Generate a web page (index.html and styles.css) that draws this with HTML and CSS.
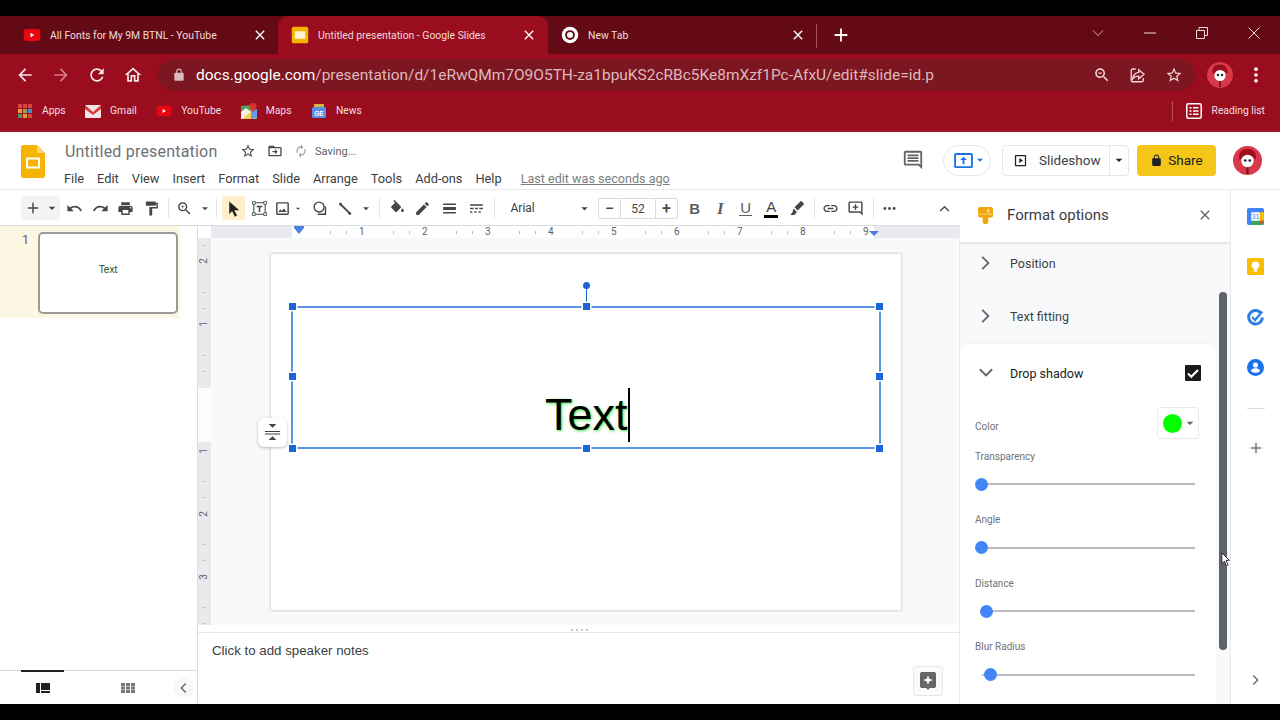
FILE: index.html
```html
<!DOCTYPE html>
<html lang="en">
<head>
    <meta charset="UTF-8">
    <title>Untitled presentation - Google Slides</title>
    <link rel="stylesheet" href="styles.css">
</head>
<body>
    <svg class="sprite" xmlns="http://www.w3.org/2000/svg">
        <symbol id="i-add" viewBox="0 0 24 24"><path d="M19 13h-6v6h-2v-6H5v-2h6V5h2v6h6v2z"/></symbol>
        <symbol id="i-close" viewBox="0 0 24 24"><path d="M19 6.41L17.59 5 12 10.59 6.41 5 5 6.41 10.59 12 5 17.59 6.41 19 12 13.41 17.59 19 19 17.59 13.41 12z"/></symbol>
        <symbol id="i-caret" viewBox="0 0 24 24"><path d="M7 10l5 5 5-5z"/></symbol>
        <symbol id="i-right" viewBox="0 0 24 24"><path d="M8.6 4.6L7.2 6l6 6-6 6 1.4 1.4 7.4-7.4z"/></symbol>
        <symbol id="i-undo" viewBox="0 0 24 24"><path d="M12.5 8c-2.65 0-5.05.99-6.9 2.6L2 7v9h9l-3.62-3.62c1.39-1.16 3.16-1.88 5.12-1.88 3.54 0 6.55 2.31 7.6 5.5l2.37-.78C21.08 11.03 17.15 8 12.5 8z"/></symbol>
        <symbol id="i-redo" viewBox="0 0 24 24"><path d="M18.4 10.6C16.55 8.99 14.15 8 11.5 8c-4.65 0-8.58 3.03-9.96 7.22L3.9 16c1.05-3.19 4.05-5.5 7.6-5.5 1.95 0 3.73.72 5.12 1.88L13 16h9V7l-3.6 3.6z"/></symbol>
        <symbol id="i-print" viewBox="0 0 24 24"><path d="M19 8H5c-1.66 0-3 1.34-3 3v6h4v4h12v-4h4v-6c0-1.66-1.34-3-3-3zm-3 11H8v-5h8v5zm3-7c-.55 0-1-.45-1-1s.45-1 1-1 1 .45 1 1-.45 1-1 1zm-1-9H6v4h12V3z"/></symbol>
        <symbol id="i-paint" viewBox="0 0 24 24"><path d="M18 4V3c0-.55-.45-1-1-1H5c-.55 0-1 .45-1 1v4c0 .55.45 1 1 1h12c.55 0 1-.45 1-1V6h1v4H9v11c0 .55.45 1 1 1h2c.55 0 1-.45 1-1v-9h8V4h-3z"/></symbol>
        <symbol id="i-search" viewBox="0 0 24 24"><path d="M15.5 14h-.79l-.28-.27C15.41 12.59 16 11.11 16 9.5 16 5.91 13.09 3 9.5 3S3 5.91 3 9.5 5.91 16 9.5 16c1.61 0 3.09-.59 4.23-1.57l.27.28v.79l5 4.99L20.49 19l-4.99-5zm-6 0C7.01 14 5 11.99 5 9.5S7.01 5 9.5 5 14 7.01 14 9.5 11.99 14 9.5 14z"/></symbol>
        <symbol id="i-star" viewBox="0 0 24 24"><path d="M22 9.24l-7.19-.62L12 2 9.19 8.63 2 9.24l5.46 4.73L5.82 21 12 17.27 18.18 21l-1.63-7.03L22 9.24zM12 15.4l-3.76 2.27 1-4.28-3.32-2.88 4.38-.38L12 6.1l1.71 4.04 4.38.38-3.32 2.88 1 4.28L12 15.4z"/></symbol>
        <symbol id="i-lock" viewBox="0 0 24 24"><path d="M18 8h-1V6c0-2.76-2.24-5-5-5S7 3.24 7 6v2H6c-1.1 0-2 .9-2 2v10c0 1.1.9 2 2 2h12c1.1 0 2-.9 2-2V10c0-1.1-.9-2-2-2zm-2.9 0H8.9V6c0-1.71 1.39-3.1 3.1-3.1 1.71 0 3.1 1.39 3.1 3.1v2z"/></symbol>
        <symbol id="i-pen" viewBox="0 0 24 24"><path d="M3 17.25V21h3.75L17.81 9.94l-3.75-3.75L3 17.25zM20.71 7.04c.39-.39.39-1.02 0-1.41l-2.34-2.34c-.39-.39-1.02-.39-1.41 0l-1.83 1.83 3.75 3.75 1.83-1.83z"/></symbol>
        <symbol id="i-chat" viewBox="0 0 24 24"><path d="M21.99 4c0-1.1-.89-2-1.99-2H4c-1.1 0-2 .9-2 2v12c0 1.1.9 2 2 2h14l4 4-.01-18zM20 4v13.17L18.83 16H4V4h16zM6 12h12v2H6zm0-3h12v2H6zm0-3h12v2H6z"/></symbol>
        <symbol id="i-yt" viewBox="0 0 24 24"><rect x="1" y="4" width="22" height="16" rx="4" fill="#e8060f"/><path d="M10 9l5 3-5 3z" fill="#fff"/></symbol>
        <symbol id="i-slides" viewBox="0 0 24 24"><rect x="1" y="1" width="22" height="22" rx="2.5" fill="#f4b400"/><rect x="5" y="7" width="14" height="10" fill="#fff3cf"/></symbol>
        <symbol id="i-avatar" viewBox="0 0 28 28"><circle cx="14" cy="14" r="14" fill="#d9374a"/><path d="M6 13C5 5 10 2 15 3c5 0 8 4 7 10-2-2-3-3-4-3-3 1-8 1-12 3z" fill="#9c0f20"/><circle cx="14" cy="14.5" r="6" fill="#fff"/><circle cx="11.8" cy="14" r="1.3" fill="#222"/><circle cx="16.2" cy="14" r="1.3" fill="#222"/><path d="M13 20.5h2V27h-2z" fill="#7b0f1c"/></symbol>
    </svg>

    <div class="letterbox-top"></div>

    <div class="tabstrip">
        <div class="tab">
            <svg class="tab-icon"><use href="#i-yt"/></svg>
            <span class="tab-title">All Fonts for My 9M BTNL - YouTube</span>
            <svg class="tab-close"><use href="#i-close"/></svg>
        </div>
        <div class="tab tab-active">
            <svg class="tab-icon"><use href="#i-slides"/></svg>
            <span class="tab-title">Untitled presentation - Google Slides</span>
            <svg class="tab-close"><use href="#i-close"/></svg>
        </div>
        <div class="tab">
            <svg class="tab-icon" viewBox="0 0 24 24"><circle cx="12" cy="12" r="11" fill="#fff"/><circle cx="12" cy="12" r="6.5" fill="#640a15"/><circle cx="12" cy="12" r="4" fill="#fff"/></svg>
            <span class="tab-title">New Tab</span>
            <svg class="tab-close"><use href="#i-close"/></svg>
        </div>
        <div class="tab-sep"></div>
        <svg class="new-tab"><use href="#i-add"/></svg>
        <div class="win-controls">
            <svg class="win-btn" viewBox="0 0 12 12"><path d="M1 3.5l5 5 5-5" fill="none" stroke="#d8a7ad"/></svg>
            <svg class="win-btn" viewBox="0 0 12 12"><path d="M0 6h12" stroke="#f0d8da"/></svg>
            <svg class="win-btn" viewBox="0 0 12 12"><path d="M.5 3.5h8v8h-8zM3 3.5v-3h8.5v8h-3" fill="none" stroke="#f0d8da"/></svg>
            <svg class="win-btn" viewBox="0 0 12 12"><path d="M.5.5l11 11M11.5.5l-11 11" stroke="#f0d8da"/></svg>
        </div>
    </div>

    <div class="navbar">
        <svg class="nav-btn" viewBox="0 0 24 24"><path d="M20 11H7.83l5.59-5.59L12 4l-8 8 8 8 1.41-1.41L7.83 13H20v-2z"/></svg>
        <svg class="nav-btn nav-off" viewBox="0 0 24 24"><path d="M12 4l-1.41 1.41L16.17 11H4v2h12.17l-5.58 5.59L12 20l8-8z"/></svg>
        <svg class="nav-btn" viewBox="0 0 24 24"><path d="M17.65 6.35C16.2 4.9 14.21 4 12 4c-4.42 0-7.99 3.58-7.99 8s3.57 8 7.99 8c3.73 0 6.84-2.55 7.73-6h-2.08c-.82 2.33-3.04 4-5.65 4-3.31 0-6-2.69-6-6s2.69-6 6-6c1.66 0 3.14.69 4.22 1.78L13 11h7V4l-2.35 2.35z"/></svg>
        <svg class="nav-btn" viewBox="0 0 24 24"><path d="M12 5.69l5 4.5V18h-2v-6H9v6H7v-7.81l5-4.5M12 3L2 12h3v8h6v-6h2v6h6v-8h3L12 3z"/></svg>
        <div class="omnibox">
            <svg class="omni-lock"><use href="#i-lock"/></svg>
            <span class="omni-url"><b>docs.google.com</b>/presentation/d/1eRwQMm7O9O5TH-za1bpuKS2cRBc5Ke8mXzf1Pc-AfxU/edit#slide=id.p</span>
            <svg class="omni-btn" viewBox="0 0 24 24"><use href="#i-search"/><path d="M7 8.7h5v1.6H7z"/></svg>
            <svg class="omni-btn" viewBox="0 0 24 24"><path d="M13 5l7 6-7 6v-3.5c-3.5 0-6 1-8 3.5.5-4 3-8 8-8.5z M9 4H5a2 2 0 0 0-2 2v13a2 2 0 0 0 2 2h12a2 2 0 0 0 2-2v-3" fill="none" stroke="#f0d8da" stroke-width="1.8"/></svg>
            <svg class="omni-btn"><use href="#i-star"/></svg>
        </div>
        <svg class="nav-avatar"><use href="#i-avatar"/></svg>
        <svg class="nav-kebab" viewBox="0 0 24 24"><circle cx="12" cy="5" r="2.2"/><circle cx="12" cy="12" r="2.2"/><circle cx="12" cy="19" r="2.2"/></svg>
    </div>

    <div class="bookmarks">
        <div class="bm">
            <svg class="bm-icon" viewBox="0 0 16 16">
                <path d="M1 1h4v4H1z" fill="#d9483b"/><path d="M6 1h4v4H6z" fill="#d9483b"/><path d="M11 1h4v4h-4z" fill="#d9483b"/>
                <path d="M1 6h4v4H1z" fill="#e8a13a"/><path d="M6 6h4v4H6z" fill="#8fae4a"/><path d="M11 6h4v4h-4z" fill="#4f86d8"/>
                <path d="M1 11h4v4H1z" fill="#4c9a5a"/><path d="M6 11h4v4H6z" fill="#e8a13a"/><path d="M11 11h4v4h-4z" fill="#d9483b"/>
            </svg>
            <span>Apps</span>
        </div>
        <div class="bm">
            <svg class="bm-icon" viewBox="0 0 16 16"><rect y="2" width="16" height="13" rx="1" fill="#f3e6e6"/><path d="M0 2l8 7 8-7v4L8 12 0 6z" fill="#d93a3a"/></svg>
            <span>Gmail</span>
        </div>
        <div class="bm">
            <svg class="bm-icon"><use href="#i-yt"/></svg>
            <span>YouTube</span>
        </div>
        <div class="bm">
            <svg class="bm-icon" viewBox="0 0 16 16"><path d="M0 3l11-1v14H0z" fill="#4aa65f"/><path d="M0 16L9 7l7 9z" fill="#f6d04a"/><path d="M0 9l5-4 5 4-9 7H0z" fill="#f2efe3"/><path d="M10 16l6-1V6l-6 2z" fill="#6a9be8"/><path d="M12 0a3.5 3.5 0 0 1 3.5 3.5C15.5 6 12 9 12 9S8.5 6 8.5 3.5A3.5 3.5 0 0 1 12 0z" fill="#d7352b"/></svg>
            <span>Maps</span>
        </div>
        <div class="bm">
            <svg class="bm-icon" viewBox="0 0 16 16"><path d="M3 1h10v5H3z" fill="#d7b04a"/><rect x="1" y="4" width="14" height="11" rx="1.5" fill="#5a8ee6"/><text x="8" y="12.5" class="news-text">GE</text></svg>
            <span>News</span>
        </div>
        <div class="reading-list">
            <svg class="rl-icon" viewBox="0 0 16 16"><rect x=".8" y=".8" width="14.4" height="14.4" rx="1.5" fill="none" stroke="#fff" stroke-width="1.5"/><path d="M3.5 4h2v1.5h-2zM7 4h5.5v1.5H7zM3.5 7.2h2v1.5h-2zM7 7.2h5.5v1.5H7zM3.5 10.5h2V12h-2zM7 10.5h5.5V12H7z" fill="#fff"/></svg>
            <span>Reading list</span>
        </div>
    </div>
    <div class="chrome-edge"></div>

    <header class="doc-header">
        <svg class="doc-logo" viewBox="0 0 24 33"><path d="M2.5 0H16l8 8v22.5a2.5 2.5 0 0 1-2.5 2.5h-19A2.5 2.5 0 0 1 0 30.5v-28A2.5 2.5 0 0 1 2.5 0z" fill="#f4b400"/><path d="M16 0l8 8h-8z" fill="#f8d775"/><path d="M6 13.5h12v9H6z" fill="none" stroke="#fff" stroke-width="2"/></svg>
        <div class="doc-titles">
            <div class="doc-title-row">
                <span class="doc-title">Untitled presentation</span>
                <svg class="title-icon"><use href="#i-star"/></svg>
                <svg class="title-icon" viewBox="0 0 24 24"><path d="M20 6h-8l-2-2H4c-1.1 0-2 .9-2 2v12c0 1.1.9 2 2 2h16c1.1 0 2-.9 2-2V8c0-1.1-.9-2-2-2zm0 12H4V8h16v10zm-8-1l4-4-4-4v3H8v2h4z"/></svg>
                <svg class="title-icon title-sync" viewBox="0 0 24 24"><path d="M12 6v3l4-4-4-4v3a8 8 0 0 0-6.8 12.2l1.5-1.5A6 6 0 0 1 12 6zm6.8 1.8l-1.5 1.5A6 6 0 0 1 12 18v-3l-4 4 4 4v-3a8 8 0 0 0 6.8-12.2z"/></svg>
                <span class="saving">Saving...</span>
            </div>
            <nav class="menu">
                <span>File</span><span>Edit</span><span>View</span><span>Insert</span><span>Format</span><span>Slide</span><span>Arrange</span><span>Tools</span><span>Add-ons</span><span>Help</span>
                <a class="last-edit">Last edit was seconds ago</a>
            </nav>
        </div>
        <div class="doc-actions">
            <svg class="act-comment"><use href="#i-chat"/></svg>
            <div class="present-pill">
                <svg class="present-icon" viewBox="0 0 20 16"><rect x="1" y="1" width="18" height="14" rx="1" fill="none" stroke="#1a73e8" stroke-width="2"/><path d="M10 4l3.5 3.5H11V12H9V7.5H6.5z" fill="#1a73e8"/></svg>
                <svg class="present-caret"><use href="#i-caret"/></svg>
            </div>
            <div class="slideshow">
                <div class="slideshow-main">
                    <svg viewBox="0 0 24 24"><path d="M19 3H5c-1.1 0-2 .9-2 2v14c0 1.1.9 2 2 2h14c1.1 0 2-.9 2-2V5c0-1.1-.9-2-2-2zm0 16H5V5h14v14zM10 8v8l6-4z"/></svg>
                    <span>Slideshow</span>
                </div>
                <div class="slideshow-more"><svg><use href="#i-caret"/></svg></div>
            </div>
            <div class="share-btn">
                <svg><use href="#i-lock"/></svg>
                <span>Share</span>
            </div>
            <svg class="doc-avatar"><use href="#i-avatar"/></svg>
        </div>
    </header>

    <div class="doc-body">
        <div class="doc-main">
            <div class="toolbar">
                <div class="tb-new">
                    <svg class="tb-plus"><use href="#i-add"/></svg>
                    <svg class="tb-new-caret"><use href="#i-caret"/></svg>
                </div>
                <div class="tb-btn"><svg><use href="#i-undo"/></svg></div>
                <div class="tb-btn"><svg><use href="#i-redo"/></svg></div>
                <div class="tb-btn"><svg><use href="#i-print"/></svg></div>
                <div class="tb-btn"><svg><use href="#i-paint"/></svg></div>
                <div class="tb-sep"></div>
                <div class="tb-btn"><svg viewBox="0 0 24 24"><use href="#i-search"/><path d="M10 7H9v2H7v1h2v2h1v-2h2V9h-2z"/></svg></div>
                <div class="tb-caret"><svg><use href="#i-caret"/></svg></div>
                <div class="tb-sep"></div>
                <div class="tb-btn tb-active"><svg viewBox="0 0 24 24"><path class="dark" d="M6 2l14 12.5h-7l4 7.5-3 1.5-4-8L6 20z"/></svg></div>
                <div class="tb-btn"><svg viewBox="0 0 24 24"><path d="M4 4h16v16H4z" fill="none" stroke="#444746" stroke-width="1.5"/><path d="M8 8h8v2.2h-2.9V17h-2.2v-6.8H8z"/><path d="M2 2h4v4H2zM18 2h4v4h-4zM2 18h4v4H2zM18 18h4v4h-4z" fill="#fff" stroke="#444746" stroke-width="1.2"/></svg></div>
                <div class="tb-btn tb-narrow"><svg viewBox="0 0 24 24"><path d="M19 3H5c-1.1 0-2 .9-2 2v14c0 1.1.9 2 2 2h14c1.1 0 2-.9 2-2V5c0-1.1-.9-2-2-2zm0 16H5V5h14v14zm-5-7l-3 3.7L9 13l-3 4h12z"/></svg></div>
                <div class="tb-caret tb-caret-sm"><svg><use href="#i-caret"/></svg></div>
                <div class="tb-btn tb-gap"><svg viewBox="0 0 24 24"><circle cx="10" cy="10" r="7" fill="none" stroke="#444746" stroke-width="2"/><path d="M19 9v11H8" fill="none" stroke="#444746" stroke-width="2"/></svg></div>
                <div class="tb-btn"><svg viewBox="0 0 24 24"><path d="M5 6l13 13" stroke="#444746" stroke-width="2.5"/><circle cx="5" cy="6" r="2"/><circle cx="18" cy="19" r="2"/></svg></div>
                <div class="tb-caret"><svg><use href="#i-caret"/></svg></div>
                <div class="tb-sep tb-sep-wide"></div>
                <div class="tb-btn"><svg viewBox="0 0 24 24"><path d="M16.56 8.94L7.62 0 6.21 1.41l2.38 2.38-5.15 5.15c-.59.59-.59 1.54 0 2.12l5.5 5.5c.29.29.68.44 1.06.44s.77-.15 1.06-.44l5.5-5.5c.59-.58.59-1.53 0-2.12zM19 11.5s-2 2.17-2 3.5c0 1.1.9 2 2 2s2-.9 2-2c0-1.33-2-3.5-2-3.5z"/></svg></div>
                <div class="tb-btn"><svg><use href="#i-pen"/></svg></div>
                <div class="tb-btn tb-gap-sm"><svg viewBox="0 0 24 24"><path d="M3 5h18v2H3zM3 10h18v4H3zM3 17h18v2H3z"/></svg></div>
                <div class="tb-btn tb-gap-sm"><svg viewBox="0 0 24 24"><path d="M3 6h18v2H3zM3 11h5v2H3zM10 11h4v2h-4zM16 11h5v2h-5zM3 16h3v2H3zM9 16h3v2H9zM15 16h3v2h-3z"/></svg></div>
                <div class="tb-sep"></div>
                <div class="tb-font">
                    <span>Arial</span>
                    <svg><use href="#i-caret"/></svg>
                </div>
                <div class="tb-size">
                    <div class="size-step">−</div>
                    <div class="size-value">52</div>
                    <div class="size-step">+</div>
                </div>
                <div class="tb-btn tb-b"><span class="fmt fmt-bold">B</span></div>
                <div class="tb-btn"><span class="fmt fmt-italic">I</span></div>
                <div class="tb-btn"><span class="fmt fmt-under">U</span></div>
                <div class="tb-btn"><span class="fmt fmt-color">A</span></div>
                <div class="tb-btn"><svg viewBox="0 0 24 24"><path d="M18.5 1.15l-9.2 9.2 4.35 4.35 9.2-9.2zM8 12l-2 6-3 3h6l2.5-2.5 1-1.5z"/></svg></div>
                <div class="tb-sep"></div>
                <div class="tb-btn"><svg viewBox="0 0 24 24"><path d="M3.9 12c0-1.71 1.39-3.1 3.1-3.1h4V7H7c-2.76 0-5 2.24-5 5s2.24 5 5 5h4v-1.9H7c-1.71 0-3.1-1.39-3.1-3.1zM8 13h8v-2H8v2zm9-6h-4v1.9h4c1.71 0 3.1 1.39 3.1 3.1s-1.39 3.1-3.1 3.1h-4V17h4c2.76 0 5-2.24 5-5s-2.24-5-5-5z"/></svg></div>
                <div class="tb-btn"><svg viewBox="0 0 24 24"><path d="M20 2H4c-1.1 0-2 .9-2 2v12c0 1.1.9 2 2 2h14l4 4V4c0-1.1-.9-2-2-2zm0 15.2L18.8 16H4V4h16zM11 6h2v3h3v2h-3v3h-2v-3H8V9h3z"/></svg></div>
                <div class="tb-sep"></div>
                <div class="tb-btn"><svg viewBox="0 0 24 24"><circle cx="5.5" cy="12" r="2"/><circle cx="12" cy="12" r="2"/><circle cx="18.5" cy="12" r="2"/></svg></div>
                <div class="tb-btn tb-collapse"><svg viewBox="0 0 24 24"><path d="M12 8l-7 7 1.4 1.4 5.6-5.6 5.6 5.6L19 15z"/></svg></div>
            </div>

            <div class="work-row">
                <aside class="filmstrip">
                    <div class="film-item">
                        <span class="film-num">1</span>
                        <div class="film-thumb"><span>Text</span></div>
                    </div>
                    <div class="film-footer">
                        <div class="film-view film-view-on">
                            <svg viewBox="0 0 14 10"><path d="M0 0h4v10H0zM5 0h9v7H5zM5 8h9v2H5z"/></svg>
                        </div>
                        <div class="film-view">
                            <svg viewBox="0 0 14 10"><path d="M0 0h4v3H0zM5 0h4v3H5zM10 0h4v3h-4zM0 3.5h4v3H0zM5 3.5h4v3H5zM10 3.5h4v3h-4zM0 7h4v3H0zM5 7h4v3H5zM10 7h4v3h-4z"/></svg>
                        </div>
                        <div class="film-hide"><svg viewBox="0 0 24 24"><path d="M15.4 6L14 4.6 6.6 12l7.4 7.4 1.4-1.4-6-6z"/></svg></div>
                    </div>
                </aside>

                <section class="editor">
                    <div class="ruler-h">
                        <div class="ruler-corner"></div>
                        <div class="ruler-h-track">
                            <div class="ruler-h-page">
                                <span>1</span><span>2</span><span>3</span><span>4</span><span>5</span><span>6</span><span>7</span><span>8</span><span>9</span>
                            </div>
                            <span class="indent indent-left"></span>
                            <span class="indent indent-right"></span>
                        </div>
                    </div>
                    <div class="canvas-row">
                        <div class="ruler-v">
                            <div class="ruler-v-on"></div>
                            <span class="rv rv-a">2</span>
                            <span class="rv rv-b">1</span>
                            <span class="rv rv-c">1</span>
                            <span class="rv rv-d">2</span>
                            <span class="rv rv-e">3</span>
                        </div>
                        <div class="canvas">
                            <div class="slide">
                                <div class="sel-box">
                                    <div class="rot-line"></div>
                                    <div class="rot-dot"></div>
                                    <i class="handle h-tl"></i><i class="handle h-tc"></i><i class="handle h-tr"></i>
                                    <i class="handle h-ml"></i><i class="handle h-mr"></i>
                                    <i class="handle h-bl"></i><i class="handle h-bc"></i><i class="handle h-br"></i>
                                    <div class="slide-text">Text<span class="caret"></span></div>
                                </div>
                                <div class="align-chip">
                                    <svg viewBox="0 0 20 20"><path d="M6 1h8l-4 4zM2 8.5h16v1H2zM2 11h16v1H2zM6 18l4-4 4 4z"/></svg>
                                </div>
                            </div>
                        </div>
                    </div>
                    <div class="notes-grip"><span></span><span></span><span></span><span></span></div>
                    <div class="notes">
                        <span>Click to add speaker notes</span>
                        <div class="notes-btn">
                            <svg viewBox="0 0 18 20"><path d="M2 0h14a2 2 0 0 1 2 2v14a2 2 0 0 1-2 2h-5l-2 2-2-2H2a2 2 0 0 1-2-2V2a2 2 0 0 1 2-2z" fill="#666"/><path d="M9 3.5l1.4 4 4.1 1.500-4.100 1.500-1.400 4-1.400-4-4.100-1.500 4.100-1.500z" fill="#fff"/></svg>
                        </div>
                    </div>
                </section>
            </div>
        </div>

        <aside class="panel">
            <div class="panel-head">
                <svg class="panel-icon" viewBox="0 0 16 18"><path d="M2 0h12a2 2 0 0 1 2 2v7a2 2 0 0 1-2 2h-3v5a2 2 0 0 1-2 2H7a2 2 0 0 1-2-2v-5H2a2 2 0 0 1-2-2V2a2 2 0 0 1 2-2z" fill="#f2a60c"/><path d="M10 2v4h2V2zM0 7h16v1H0z" fill="#fde293"/></svg>
                <span class="panel-title">Format options</span>
                <svg class="panel-close"><use href="#i-close"/></svg>
            </div>
            <div class="panel-row">
                <svg><use href="#i-right"/></svg>
                <span>Position</span>
            </div>
            <div class="panel-row panel-row-next">
                <svg><use href="#i-right"/></svg>
                <span>Text fitting</span>
            </div>
            <div class="card">
                <div class="card-head">
                    <svg viewBox="0 0 24 24"><path d="M19.4 8.6L18 7.2l-6 6-6-6-1.4 1.4 7.4 7.4z"/></svg>
                    <span>Drop shadow</span>
                    <div class="check"><svg viewBox="0 0 16 16"><path d="M3 8.5l3.3 3.3L13 5" fill="none" stroke="#fff" stroke-width="2"/></svg></div>
                </div>
                <div class="color-row">
                    <span class="field-label color-label">Color</span>
                    <div class="color-btn">
                        <span class="swatch"></span>
                        <svg><use href="#i-caret"/></svg>
                    </div>
                </div>
                <div class="field">
                    <div class="field-label">Transparency</div>
                    <div class="slider"><span class="thumb" style="left:0px"></span></div>
                </div>
                <div class="field">
                    <div class="field-label">Angle</div>
                    <div class="slider"><span class="thumb" style="left:0px"></span></div>
                </div>
                <div class="field">
                    <div class="field-label">Distance</div>
                    <div class="slider"><span class="thumb" style="left:4.5px"></span></div>
                </div>
                <div class="field">
                    <div class="field-label">Blur Radius</div>
                    <div class="slider"><span class="thumb" style="left:9px"></span></div>
                </div>
            </div>
            <div class="panel-scroll"></div>
            <svg class="mouse" viewBox="0 0 12 18"><path d="M1 1v13l3-3 2.5 5.5 2-1L6 10h4z" fill="#fff" stroke="#111"/></svg>
        </aside>

        <aside class="sidebar">
            <svg class="side-icon" viewBox="0 0 20 20"><rect width="20" height="20" rx="2" fill="#4285f4"/><path d="M15 5v10H5v5h13a2 2 0 0 0 2-2V5z" fill="#34a853"/><path d="M15 5h5v10h-5z" fill="#fbbc04"/><path d="M15 15h5l-5 5z" fill="#ea4335"/><rect x="5" y="5" width="10" height="10" fill="#fff"/><text x="10" y="13" class="cal-text">31</text></svg>
            <svg class="side-icon" viewBox="0 0 20 20"><rect width="20" height="20" rx="1.5" fill="#fbbc04"/><circle cx="10" cy="8.5" r="4.5" fill="#fff"/><path d="M8 13h4v3H8z" fill="#fff"/></svg>
            <svg class="side-icon" viewBox="0 0 20 20"><path d="M16.5 5A8 8 0 1 0 18 10" fill="none" stroke="#2f7de1" stroke-width="3.5"/><path d="M6 9.5l3.5 3.5L18 3" fill="none" stroke="#2f7de1" stroke-width="2.6"/></svg>
            <svg class="side-icon" viewBox="0 0 20 20"><circle cx="10" cy="10" r="10" fill="#1a73e8"/><circle cx="10" cy="7" r="3" fill="#fff"/><path d="M4.5 14c1-2.5 3.5-3 5.5-3s4.500.5 5.500 3a8 8 0 0 1-11 0z" fill="#fff"/></svg>
            <div class="side-divider"></div>
            <svg class="side-add"><use href="#i-add"/></svg>
            <svg class="side-more"><use href="#i-right"/></svg>
        </aside>
    </div>

    <div class="letterbox-bottom"></div>
</body>
</html>
```

FILE: styles.css
```css
* {
    box-sizing: border-box;
}

html, body {
    margin: 0;
    height: 720px;
    overflow: hidden;
}

body {
    background: #fff;
    font-family: "Roboto", "Liberation Sans", sans-serif;
    color: #3c4043;
}

svg {
    display: block;
    fill: currentColor;
}

.sprite {
    display: none;
}

.letterbox-top,
.letterbox-bottom {
    height: 16px;
    background: #000;
}

/* browser chrome */
.tabstrip {
    height: 38px;
    background: #640a15;
    display: flex;
    align-items: stretch;
    color: #f1dcde;
}

.tab {
    width: 268px;
    display: flex;
    align-items: center;
    gap: 9px;
    padding: 0 10px 0 13px;
    font-size: 10.4px;
}

.tab:first-child {
    width: 278px;
    padding-left: 23px;
}

.tab-active {
    width: 270px;
    background: #9a0d1e;
    border-radius: 10px 10px 0 0;
    padding-right: 11px;
}

.tab-icon {
    width: 18px;
    height: 18px;
    flex: none;
}

.tab-title {
    flex: 1;
    white-space: nowrap;
}

.tab-close {
    width: 16px;
    height: 16px;
    color: #fff;
    flex: none;
}

.tab-sep {
    width: 1px;
    height: 24px;
    margin-top: 8px;
    background: #a8575f;
}

.new-tab {
    width: 22px;
    height: 22px;
    margin: 8px 14px 0 13px;
    color: #fff;
}

.win-controls {
    margin-left: auto;
    display: flex;
    gap: 40px;
    padding: 11px 20px 0 0;
}

.win-btn {
    width: 12px;
    height: 12px;
}

.navbar {
    height: 38px;
    background: #9a0d1e;
    display: flex;
    align-items: center;
    padding: 3px 0 0 7px;
    color: #f6e7e8;
}

.nav-btn {
    width: 20px;
    height: 20px;
    margin: 0 8px;
    flex: none;
}

.nav-off {
    color: #d57e88;
}

.omnibox {
    width: 1037px;
    height: 32px;
    margin-left: 7px;
    padding: 0 3px 0 14px;
    border-radius: 16px;
    background: #7c1620;
    display: flex;
    align-items: center;
    color: #dcb9bd;
}

.omni-lock {
    width: 14px;
    height: 14px;
    margin-right: 10px;
    flex: none;
}

.omni-url {
    flex: 1;
    font-size: 15.48px;
    white-space: nowrap;
}

.omni-url b {
    font-weight: 400;
    color: #fff;
}

.omni-btn {
    width: 18px;
    height: 18px;
    margin: 0 9px;
    color: #f0d8da;
    flex: none;
}

.nav-avatar {
    width: 26px;
    height: 26px;
    margin-left: 12px;
    flex: none;
}

.nav-kebab {
    width: 20px;
    height: 20px;
    margin-left: 13px;
    color: #fff;
}

.bookmarks {
    height: 38px;
    background: #9a0d1e;
    display: flex;
    align-items: center;
    gap: 19.5px;
    padding: 0 0 1px 17px;
    color: #f3dfe1;
    font-size: 10.3px;
}

.bm {
    display: flex;
    align-items: center;
    gap: 9px;
}

.bm-icon {
    width: 16px;
    height: 16px;
}

.news-text {
    font-family: "Liberation Sans", sans-serif;
    font-size: 6.5px;
    font-weight: 700;
    text-anchor: middle;
    fill: #fff;
}

.reading-list {
    margin-left: auto;
    height: 20px;
    display: flex;
    align-items: center;
    gap: 10px;
    padding: 0 15px 0 13px;
    border-left: 1px solid #b8515c;
}

.rl-icon {
    width: 16px;
    height: 16px;
}

.chrome-edge {
    height: 2px;
    background: #a3192b;
}

/* docs header */
.doc-header {
    height: 58px;
    display: flex;
    padding-left: 21px;
    border-bottom: 1px solid #e8eaed;
}

.doc-logo {
    width: 24px;
    height: 33px;
    margin-top: 13px;
    flex: none;
}

.doc-titles {
    margin-left: 18px;
    flex: 1;
}

.doc-title-row {
    height: 30px;
    margin-top: 4px;
    display: flex;
    align-items: center;
}

.doc-title {
    font-size: 16px;
    letter-spacing: .2px;
    color: #6d7175;
    width: 175px;
    margin-left: 2px;
}

.title-icon {
    width: 16px;
    height: 16px;
    margin-right: 11px;
    color: #474b4f;
}

.title-sync {
    width: 14px;
    height: 14px;
    margin-right: 7px;
    color: #9aa0a6;
}

.saving {
    font-size: 11px;
    color: #5f6368;
}

.menu {
    display: flex;
    gap: 13px;
    font-size: 12.8px;
    color: #3c4043;
    margin-top: 5px;
    padding-left: 1px;
}

.last-edit {
    margin-left: 6px;
    font-size: 12.6px;
    color: #7a7e82;
    text-decoration: underline;
}

.doc-actions {
    display: flex;
    align-items: center;
    padding-right: 18px;
    margin-top: -1px;
}

.act-comment {
    width: 22px;
    height: 22px;
    margin-right: 19px;
    color: #5f6368;
}

.present-pill {
    width: 48px;
    height: 31px;
    border: 1px solid #e4e6e8;
    border-radius: 16px;
    display: flex;
    align-items: center;
    padding-left: 10px;
    color: #1a73e8;
}

.present-icon {
    width: 19px;
    height: 15px;
}

.present-caret {
    width: 14px;
    height: 14px;
}

.slideshow {
    width: 127px;
    height: 31px;
    margin-left: 11px;
    border: 1px solid #e4e6e8;
    border-radius: 4px;
    display: flex;
    font-size: 13.5px;
    color: #3c4043;
}

.slideshow-main {
    flex: 1;
    display: flex;
    align-items: center;
    gap: 11px;
    padding-left: 10px;
    border-right: 1px solid #e4e6e8;
}

.slideshow-main svg {
    width: 15px;
    height: 15px;
    color: #202124;
}

.slideshow-more {
    width: 18px;
    display: flex;
    align-items: center;
    justify-content: center;
    color: #202124;
}

.slideshow-more svg {
    width: 16px;
    height: 16px;
}

.share-btn {
    width: 79px;
    height: 31px;
    margin-left: 8px;
    border-radius: 4px;
    background: #f5c518;
    display: flex;
    align-items: center;
    justify-content: center;
    gap: 5px;
    font-size: 13.5px;
    color: #202124;
}

.share-btn svg {
    width: 13px;
    height: 13px;
}

.doc-avatar {
    width: 29px;
    height: 29px;
    margin-left: 17px;
}

/* main layout */
.doc-body {
    height: 514px;
    display: flex;
}

.doc-main {
    width: 960px;
    display: flex;
    flex-direction: column;
    flex: none;
}

.toolbar {
    height: 36px;
    flex: none;
    display: flex;
    align-items: center;
    padding: 1px 0 0 21px;
    border-bottom: 1px solid #dadce0;
    color: #444746;
}

.tb-new {
    width: 39px;
    height: 24px;
    margin-right: 2px;
    background: #f1f3f4;
    display: flex;
    align-items: center;
}

.tb-plus {
    width: 18px;
    height: 18px;
    margin-left: 3px;
}

.tb-new-caret {
    width: 16px;
    height: 16px;
    margin-left: 2px;
}

.tb-btn {
    width: 25.5px;
    height: 24px;
    flex: none;
    display: flex;
    align-items: center;
    justify-content: center;
}

.tb-btn svg {
    width: 17px;
    height: 17px;
}

.tb-caret {
    width: 14px;
    flex: none;
    display: flex;
    justify-content: center;
}

.tb-caret svg {
    width: 15px;
    height: 15px;
}

.tb-caret-sm {
    width: 10px;
}

.tb-sep {
    width: 8px;
    height: 20px;
    flex: none;
    position: relative;
}

.tb-sep::after {
    content: "";
    position: absolute;
    left: 50%;
    top: 0;
    width: 1px;
    height: 20px;
    background: #e3e5e8;
}

.tb-sep-wide {
    width: 12px;
}

.tb-active {
    width: 23px;
    margin: 0 2px 0 2.5px;
    background: #fdf0c8;
    border-radius: 2px;
}

.dark {
    fill: #202124;
}

.tb-narrow {
    width: 20px;
}

.tb-gap {
    margin-left: 5px;
}

.tb-gap-sm {
    margin-left: 1.5px;
}

.tb-font {
    width: 100.5px;
    padding: 0 6px 0 13px;
    display: flex;
    align-items: center;
    justify-content: space-between;
    font-size: 12px;
    color: #3c4043;
}

.tb-font svg {
    width: 15px;
    height: 15px;
}

.tb-size {
    width: 80px;
    height: 21px;
    border: 1px solid #dadce0;
    border-radius: 2px;
    display: flex;
    flex: none;
    font-size: 12px;
}

.size-step {
    width: 21px;
    text-align: center;
    font-size: 16px;
    font-weight: 500;
    line-height: 19px;
}

.size-value {
    flex: 1;
    border-left: 1px solid #dadce0;
    border-right: 1px solid #dadce0;
    text-align: center;
    line-height: 20px;
}

.tb-b {
    margin-left: 4px;
}

.fmt {
    font-family: "Liberation Sans", sans-serif;
    font-size: 15px;
    line-height: 1;
}

.fmt-bold {
    font-weight: 700;
    color: #5a5e62;
}

.fmt-italic {
    font-family: "Liberation Serif", serif;
    font-style: italic;
    font-weight: 700;
    font-size: 17px;
    color: #5a5e62;
}

.fmt-under {
    border-bottom: 1.5px solid #5a5e62;
    color: #5a5e62;
    padding: 0 1px;
}

.fmt-color {
    border-bottom: 3px solid #000;
    color: #444746;
    padding: 0 2px 1px;
}

.tb-collapse {
    margin-left: auto;
    margin-right: 3px;
}

.work-row {
    flex: 1;
    display: flex;
    min-height: 0;
}

/* filmstrip */
.filmstrip {
    width: 198px;
    flex: none;
    border-right: 1px solid #dadce0;
    display: flex;
    flex-direction: column;
}

.film-item {
    width: 180px;
    height: 92px;
    background: #fbf7e3;
    display: flex;
    padding: 6px 0 0 22px;
}

.film-num {
    width: 16px;
    font-size: 12.5px;
    color: #5f6368;
}

.film-thumb {
    width: 140px;
    height: 82px;
    padding-bottom: 8px;
    border: 2px solid #9a9a9a;
    border-radius: 5px;
    background: #fff;
    display: flex;
    align-items: center;
    justify-content: center;
    font-family: "Liberation Sans", sans-serif;
    font-size: 10px;
    color: #184d18;
}

.film-footer {
    margin-top: auto;
    height: 34px;
    border-top: 1px solid #dadce0;
    display: flex;
    align-items: center;
    padding-left: 21px;
    position: relative;
}

.film-view {
    width: 43px;
    display: flex;
    justify-content: center;
    color: #202124;
}

.film-view + .film-view {
    margin-left: 42px;
    color: #757575;
}

.film-view-on::before {
    content: "";
    position: absolute;
    left: 21px;
    top: -1px;
    width: 43px;
    height: 2px;
    background: #202124;
}

.film-view svg {
    width: 14px;
    height: 10px;
}

.film-hide {
    width: 20px;
    height: 20px;
    margin-left: 25px;
    border-radius: 50%;
    background: #f6f7f8;
    color: #5f6368;
    padding: 2px;
}

/* rulers and canvas */
.editor {
    flex: 1;
    min-width: 0;
    display: flex;
    flex-direction: column;
    border-right: 1px solid #e8eaed;
}

.ruler-h {
    height: 12px;
    flex: none;
    display: flex;
}

.ruler-corner {
    width: 13px;
    flex: none;
}

.ruler-h-track {
    flex: 1;
    background: #e8eaed;
    padding-left: 81px;
    position: relative;
}

.ruler-h-page {
    width: 582px;
    height: 12px;
    background-color: #fff;
    background-image: repeating-linear-gradient(90deg,
        transparent 0, transparent 22.75px, #b9bdc1 22.75px, #b9bdc1 23.5px,
        transparent 23.5px, transparent 38.5px, #b9bdc1 38.5px, #b9bdc1 39.25px,
        transparent 39.25px, transparent 54.25px, #b9bdc1 54.25px, #b9bdc1 55px,
        transparent 55px, transparent 63px);
    background-size: 100% 3px;
    background-position: 0 5px;
    background-repeat: no-repeat;
    display: flex;
    padding-left: 67px;
    font-size: 10px;
    line-height: 12px;
    color: #5f6368;
}

.ruler-h-page span {
    width: 63px;
    flex: none;
}

.ruler-h-page span:last-child {
    width: 8px;
}

.indent {
    position: absolute;
    top: 2px;
    width: 0;
    height: 0;
    border-left: 5px solid transparent;
    border-right: 5px solid transparent;
    border-top: 6px solid #4a80dc;
}

.indent-left {
    left: 83px;
}

.indent-left::before {
    content: "";
    position: absolute;
    left: -5px;
    top: -8px;
    width: 10px;
    height: 2px;
    background: #4a80dc;
}

.indent-right {
    left: 658px;
    top: 5px;
    border-top-width: 5px;
}

.canvas-row {
    height: 387px;
    flex: none;
    display: flex;
}

.ruler-v {
    width: 13px;
    flex: none;
    background-color: #e8eaed;
    background-image: repeating-linear-gradient(180deg,
        transparent 0, transparent 7.25px, #b9bdc1 7.25px, #b9bdc1 8px,
        transparent 8px, transparent 38.75px, #b9bdc1 38.75px, #b9bdc1 39.5px,
        transparent 39.5px, transparent 54.5px, #b9bdc1 54.5px, #b9bdc1 55.25px,
        transparent 55.25px, transparent 63px);
    background-size: 3px 100%;
    background-position: 5px 0;
    background-repeat: no-repeat;
    position: relative;
    font-size: 10px;
    color: #5f6368;
}

.ruler-v-on {
    position: absolute;
    left: 0;
    top: 150px;
    width: 13px;
    height: 54px;
    background: rgba(255, 255, 255, .85);
}

.rv {
    position: absolute;
    left: 2px;
    transform: rotate(-90deg);
    line-height: 10px;
    width: 8px;
    text-align: center;
}

.rv-a { top: 18px; }
.rv-b { top: 81px; }
.rv-c { top: 208px; }
.rv-d { top: 271px; }
.rv-e { top: 334px; }

.canvas {
    flex: 1;
    background: #f8f9fa;
    padding: 16px 0 0 60px;
}

.slide {
    width: 630px;
    height: 356px;
    background: #fff;
    box-shadow: 0 0 2px 1px rgba(60, 64, 67, .2);
    position: relative;
}

.sel-box {
    position: absolute;
    left: 20px;
    top: 52px;
    width: 590px;
    height: 143px;
    border: 2px solid #5c94e6;
}

.rot-line {
    position: absolute;
    left: 293px;
    top: -20px;
    width: 1px;
    height: 20px;
    background: #1a66d6;
}

.rot-dot {
    position: absolute;
    left: 290px;
    top: -26px;
    width: 7px;
    height: 7px;
    border-radius: 50%;
    background: #1a66d6;
}

.handle {
    position: absolute;
    width: 7px;
    height: 7px;
    background: #1a66d6;
    box-shadow: 0 0 0 1.5px #fff;
}

.h-tl { left: -4px; top: -5px; }
.h-tc { left: 290px; top: -5px; }
.h-tr { right: -4px; top: -5px; }
.h-ml { left: -4px; top: 65px; }
.h-mr { right: -4px; top: 65px; }
.h-bl { left: -4px; bottom: -5px; }
.h-bc { left: 290px; bottom: -5px; }
.h-br { right: -4px; bottom: -5px; }

.slide-text {
    position: absolute;
    left: 252px;
    top: 80px;
    font-family: "Liberation Sans", sans-serif;
    font-size: 45px;
    line-height: 52px;
    color: #000;
    text-shadow: 1px 1px 3px #3de83d;
    white-space: nowrap;
}

.caret {
    display: inline-block;
    width: 2px;
    height: 54px;
    background: #000;
    vertical-align: -12px;
}

.align-chip {
    position: absolute;
    left: -13px;
    top: 164px;
    width: 29px;
    height: 29px;
    border-radius: 6px;
    background: #fff;
    box-shadow: 0 1px 3px rgba(60, 64, 67, .35);
    padding: 5px;
    color: #444;
}

.align-chip svg {
    width: 19px;
    height: 19px;
}

.notes-grip {
    height: 8px;
    flex: none;
    display: flex;
    justify-content: center;
    align-items: center;
    gap: 2px;
    border-bottom: 1px solid #e4e6e8;
    padding-top: 2px;
    background: #fff;
}

.notes-grip span {
    width: 2px;
    height: 2px;
    margin-left: 1px;
    background: #c4c7ca;
}

.notes {
    flex: 1;
    padding: 10px 15px 0 14px;
    position: relative;
    font-family: "Liberation Sans", sans-serif;
    font-size: 13.3px;
    color: #3c4043;
}

.notes-btn {
    position: absolute;
    right: 16px;
    bottom: 8px;
    width: 30px;
    height: 30px;
    border: 1px solid #e4e6e8;
    border-radius: 3px;
    background: #fbfbfb;
    display: flex;
    align-items: center;
    justify-content: center;
}

.notes-btn svg {
    width: 16px;
    height: 18px;
}

/* format options panel */
.panel {
    width: 270px;
    flex: none;
    background: #f8f9fa;
    position: relative;
    overflow: hidden;
}

.panel-head {
    height: 52px;
    background: #fff;
    display: flex;
    align-items: center;
    padding: 0 17px 2px 18px;
    box-shadow: 0 1px 3px rgba(60, 64, 67, .2);
    position: relative;
}

.panel-icon {
    width: 15px;
    height: 17px;
}

.panel-title {
    margin-left: 14px;
    flex: 1;
    font-size: 15px;
    color: #3c4043;
}

.panel-close {
    width: 16px;
    height: 16px;
    color: #5f6368;
}

.panel-row {
    height: 42px;
    display: flex;
    align-items: center;
    padding-left: 15px;
    font-size: 12.5px;
    color: #3c4043;
}

.panel-row svg,
.card-head svg {
    width: 22px;
    height: 22px;
    color: #5f6368;
    margin-right: 13px;
}

.panel-row-next {
    margin-top: 11px;
}

.card {
    width: 256px;
    height: 360px;
    margin-top: 6px;
    padding: 0 21px 0 15px;
    background: #fff;
    border-radius: 8px 8px 0 0;
    border-top: 1px solid #f1f3f4;
}

.card-head {
    height: 58px;
    display: flex;
    align-items: center;
    font-size: 12.5px;
    color: #202124;
}

.check {
    margin-left: auto;
    width: 16px;
    height: 16px;
    margin-right: -6px;
    border-radius: 1px;
    background: #1b1b1b;
}

.check svg {
    width: 16px;
    height: 16px;
    margin: 0;
}

.color-row {
    height: 32px;
    margin: 5px -4px 0 0;
    display: flex;
    align-items: center;
    justify-content: space-between;
}

.field-label {
    font-size: 10px;
    line-height: 14px;
    color: #6f7478;
}

.color-label {
    padding-top: 7px;
}

.color-btn {
    width: 42px;
    height: 32px;
    border: 1px solid #e8eaed;
    border-radius: 3px;
    display: flex;
    align-items: center;
    padding-left: 5px;
    color: #5f6368;
}

.swatch {
    width: 19px;
    height: 19px;
    border-radius: 50%;
    background: #0f0;
    flex: none;
}

.color-btn svg {
    width: 16px;
    height: 16px;
}

.field {
    margin-bottom: 21px;
}

.color-row + .field {
    margin-top: 10.5px;
}

.slider {
    height: 16px;
    margin-top: 12.5px;
    position: relative;
}

.slider::before {
    content: "";
    position: absolute;
    left: 7px;
    right: 0;
    top: 7px;
    height: 2px;
    background: #bdbdbd;
}

.thumb {
    position: absolute;
    top: 1.5px;
    width: 13px;
    height: 13px;
    border-radius: 50%;
    background: #4285f4;
}

.panel-scroll {
    position: absolute;
    left: 259px;
    top: 102px;
    width: 8px;
    height: 358px;
    border-radius: 4px;
    background: #5f6368;
}

.mouse {
    position: absolute;
    left: 261px;
    top: 362px;
    width: 10px;
    height: 15px;
}

/* side icon rail */
.sidebar {
    flex: 1;
    border-left: 1px solid #e8eaed;
    display: flex;
    flex-direction: column;
    align-items: center;
    padding-top: 18px;
}

.side-icon {
    width: 17px;
    height: 17px;
    margin-bottom: 33.3px;
}

.side-divider {
    width: 18px;
    height: 1px;
    margin-top: -1px;
    background: #dadce0;
}

.side-add {
    width: 18px;
    height: 18px;
    margin-top: 30px;
    color: #70757a;
}

.side-more {
    width: 16px;
    height: 16px;
    margin-top: auto;
    margin-bottom: 16px;
    color: #5f6368;
}

.cal-text {
    font-family: "Liberation Sans", sans-serif;
    font-size: 8px;
    text-anchor: middle;
    fill: #4285f4;
}
```
